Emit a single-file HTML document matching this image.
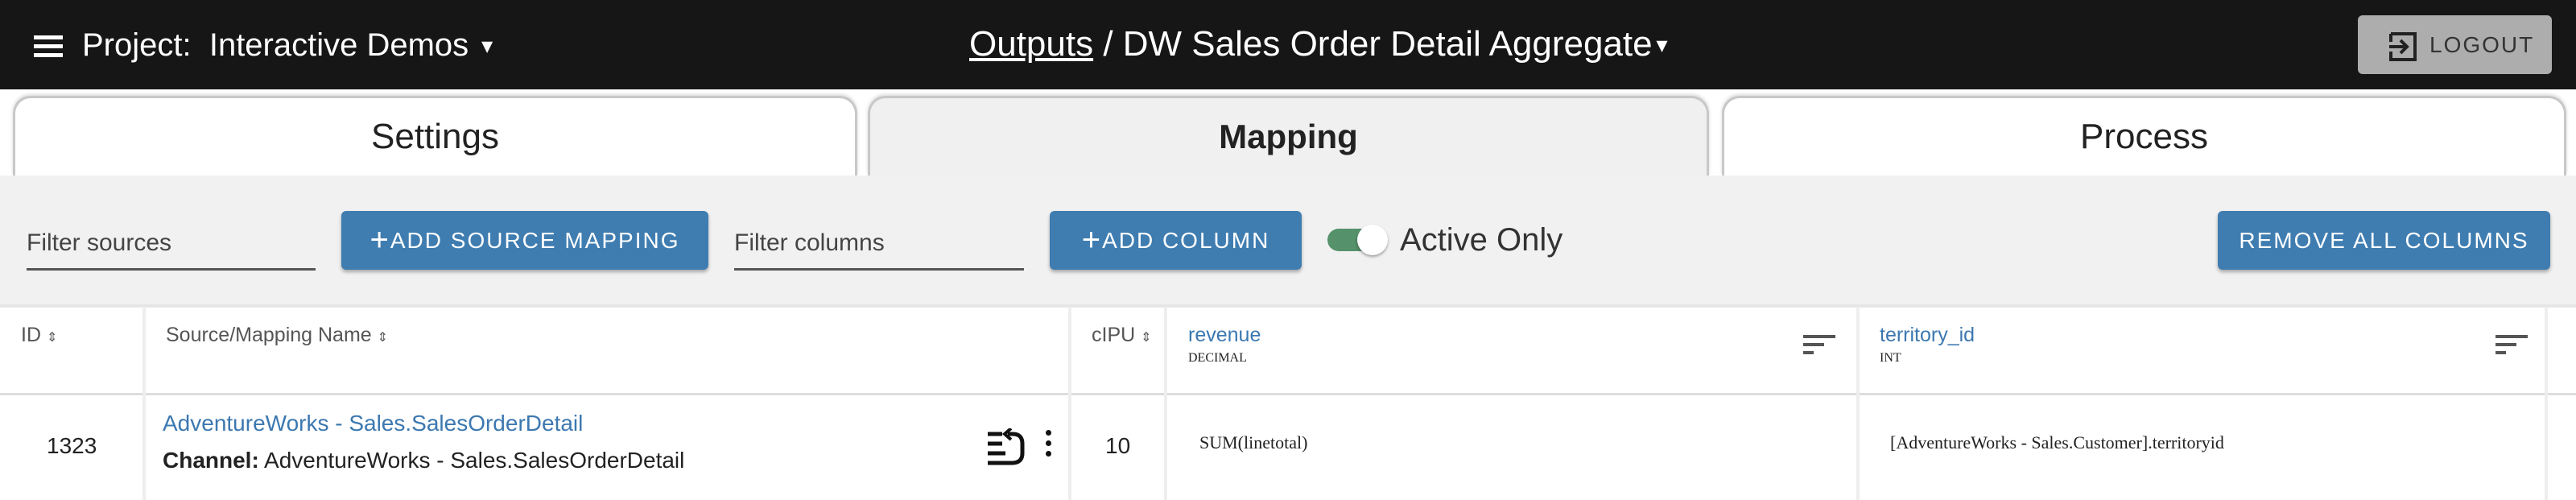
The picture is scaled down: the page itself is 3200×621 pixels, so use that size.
<!DOCTYPE html>
<html><head><meta charset="utf-8"><style>
*{box-sizing:border-box;margin:0;padding:0}
body{width:3200px;height:621px;position:relative;overflow:hidden;background:#fff;font-family:"Liberation Sans",sans-serif}
.a{position:absolute}
.hdr{left:0;top:0;width:3200px;height:111px;background:#161616}
.tab{top:119px;height:99px;border:3px solid #c8c8c8;border-bottom:none;border-radius:22px 22px 0 0;background:#fff;text-align:center;font-size:44px;line-height:96px;color:#222;box-shadow:0 -2px 4px rgba(0,0,0,.15)}
.bar{left:0;top:218px;width:3200px;height:162px;background:#f1f1f1}
.inp{top:262px;height:74px;border-bottom:3px solid #555;font-size:30px;color:#444;line-height:80px;padding-left:0}
.btn{top:262px;height:73px;background:#3f7db1;color:#fff;border-radius:6px;font-size:28px;letter-spacing:2px;line-height:73px;text-align:center;box-shadow:0 3px 4px rgba(0,0,0,.3)}
.th{font-size:25px;color:#555}
.vl{top:381px;width:4px;height:240px;background:#eee}
.srt{display:inline-block;width:14px;height:22px;vertical-align:middle}
</style></head><body>
<div class="a hdr"></div>
<div class="a" style="left:42px;top:44px;width:36px;height:5px;background:#fff;box-shadow:0 11px 0 #fff,0 22px 0 #fff"></div>
<div class="a" style="left:102px;top:30px;font-size:40px;color:#fff;line-height:52px">Project:&nbsp; Interactive Demos <span style="font-size:24px;vertical-align:middle">▼</span></div>
<div class="a" style="left:1204px;top:28px;font-size:44px;color:#fff;line-height:54px"><span style="text-decoration:underline">Outputs</span> / DW Sales Order Detail Aggregate<span style="font-size:24px;vertical-align:middle">▼</span></div>
<div class="a" style="left:2929px;top:19px;width:241px;height:73px;background:#adadad;border-radius:6px"></div>
<svg class="a" style="left:2966px;top:40px" width="38" height="36" viewBox="0 0 38 36"><path d="M4 2h30v32H4V24M4 12V2" fill="none" stroke="#222" stroke-width="4"/><path d="M2 18h22M16 10l8 8-8 8" fill="none" stroke="#222" stroke-width="4"/></svg>
<div class="a" style="left:3018px;top:19px;line-height:73px;font-size:28px;color:#333;letter-spacing:2px">LOGOUT</div>

<div class="a tab" style="left:16px;width:1049px">Settings</div>
<div class="a tab" style="left:1078px;width:1045px;background:#f0f0f0;font-weight:bold;font-size:42px">Mapping</div>
<div class="a tab" style="left:2139px;width:1049px">Process</div>
<div class="a bar"></div>
<div class="a inp" style="left:33px;width:359px">Filter sources</div>
<div class="a btn" style="left:424px;width:456px"><span style="font-size:40px;vertical-align:-3px">+</span>ADD SOURCE MAPPING</div>
<div class="a inp" style="left:912px;width:360px">Filter columns</div>
<div class="a btn" style="left:1304px;width:313px"><span style="font-size:40px;vertical-align:-3px">+</span>ADD COLUMN</div>
<div class="a" style="left:1649px;top:284px;width:56px;height:28px;border-radius:14px;background:#55916a"></div>
<div class="a" style="left:1686px;top:279px;width:38px;height:38px;border-radius:50%;background:#fff;box-shadow:0 2px 3px rgba(0,0,0,.35)"></div>
<div class="a" style="left:1739px;top:272px;font-size:40px;color:#333;line-height:52px">Active Only</div>
<div class="a btn" style="left:2755px;width:413px">REMOVE ALL COLUMNS</div>

<div class="a" style="left:0;top:378px;width:3200px;height:4px;background:#e6e6e6"></div>
<div class="a" style="left:0;top:488px;width:3200px;height:3px;background:#ddd"></div>
<div class="a vl" style="left:177px"></div>
<div class="a vl" style="left:1327px"></div>
<div class="a vl" style="left:1446px"></div>
<div class="a vl" style="left:2306px"></div>
<div class="a vl" style="left:3161px"></div>
<div class="a th" style="left:26px;top:402px">ID <span style="font-size:16px">⇕</span></div>
<div class="a th" style="left:206px;top:402px">Source/Mapping Name <span style="font-size:16px">⇕</span></div>
<div class="a th" style="left:1356px;top:402px">cIPU <span style="font-size:16px">⇕</span></div>
<div class="a" style="left:1476px;top:402px;font-size:25px;color:#3c78b0">revenue</div>
<div class="a" style="left:1476px;top:436px;font-size:16px;font-family:'Liberation Serif',serif;color:#222">DECIMAL</div>
<div class="a" style="left:2335px;top:402px;font-size:25px;color:#3c78b0">territory_id</div>
<div class="a" style="left:2335px;top:436px;font-size:16px;font-family:'Liberation Serif',serif;color:#222">INT</div>
<svg class="a" style="left:2240px;top:416px" width="40" height="26"><rect x="0" y="0" width="40" height="4" fill="#555"/><rect x="0" y="10" width="26" height="4" fill="#555"/><rect x="0" y="20" width="13" height="4" fill="#555"/></svg>
<svg class="a" style="left:3100px;top:416px" width="40" height="26"><rect x="0" y="0" width="40" height="4" fill="#555"/><rect x="0" y="10" width="26" height="4" fill="#555"/><rect x="0" y="20" width="13" height="4" fill="#555"/></svg>

<div class="a" style="left:58px;top:538px;font-size:28px;color:#222">1323</div>
<div class="a" style="left:202px;top:510px;font-size:28px;color:#3c78b0">AdventureWorks - Sales.SalesOrderDetail</div>
<div class="a" style="left:202px;top:556px;font-size:28px;color:#222"><b>Channel:</b> AdventureWorks - Sales.SalesOrderDetail</div>
<svg class="a" style="left:1226px;top:532px" width="50" height="46" viewBox="0 0 50 46"><path d="M1 7h18M1 19h18M1 31h22M1 43h30q13 0 13-12V19q0-12-12-12h-6" fill="none" stroke="#111" stroke-width="5"/><path d="M30 0l-8 7 8 7" fill="none" stroke="#111" stroke-width="4"/></svg>
<div class="a" style="left:1299px;top:534px;width:7px;height:7px;border-radius:50%;background:#111;box-shadow:0 13px 0 #111,0 26px 0 #111"></div>
<div class="a" style="left:1373px;top:538px;font-size:28px;color:#222">10</div>
<div class="a" style="left:1490px;top:537px;font-size:22px;font-family:'Liberation Serif',serif;color:#222">SUM(linetotal)</div>
<div class="a" style="left:2348px;top:537px;font-size:22px;font-family:'Liberation Serif',serif;color:#222">[AdventureWorks - Sales.Customer].territoryid</div>
</body></html>
